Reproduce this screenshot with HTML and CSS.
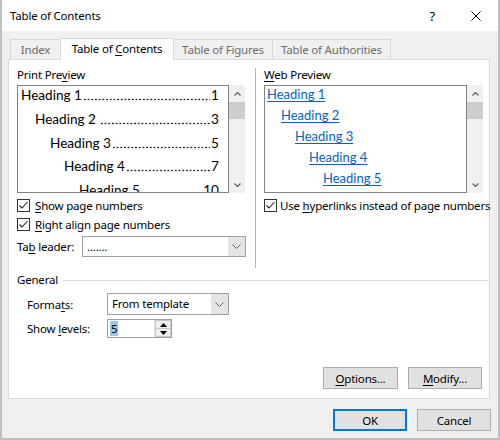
FILE: index.html
```html
<!DOCTYPE html>
<html>
<head>
<meta charset="utf-8">
<title>Table of Contents</title>
<link rel="stylesheet" href="styles.css">
</head>
<body>
<div class="window">
  <div class="titlebar">
    <span class="title">Table of Contents</span>
    <span class="help">?</span>
    <svg class="close" width="10" height="10" viewBox="0 0 10 10"><path d="M0.5 0.5 L9.5 9.5 M9.5 0.5 L0.5 9.5" stroke="#000" stroke-width="1" fill="none"/></svg>
  </div>
  <div class="client">
    <div class="tabs">
      <div class="tab t-index">Index</div>
      <div class="tab active t-toc">Table of <u>C</u>ontents</div>
      <div class="tab t-fig">Table of Figures</div>
      <div class="tab t-auth">Table of Authorities</div>
    </div>
    <div class="panel">
      <div class="top">
        <div class="col left">
          <div class="label">Print Pre<u>v</u>iew</div>
          <div class="preview">
            <div class="pbox print">
              <div class="toc-row l1"><span>Heading 1</span><span class="dots"></span><span>1</span></div>
              <div class="toc-row l2"><span>Heading 2&nbsp;</span><span class="dots"></span><span>3</span></div>
              <div class="toc-row l3"><span>Heading 3</span><span class="dots"></span><span>5</span></div>
              <div class="toc-row l4"><span>Heading 4</span><span class="dots"></span><span>7</span></div>
              <div class="toc-row l5"><span>Heading 5</span><span class="dots"></span><span>10</span></div>
            </div>
            <div class="scrollbar">
              <div class="arrow"><svg width="7" height="4" viewBox="0 0 7 4"><polyline points="0.5,3.5 3.5,0.5 6.5,3.5" fill="none" stroke="#606060" stroke-width="1.2"/></svg></div>
              <div class="thumb"></div>
              <div class="track"></div>
              <div class="arrow"><svg width="7" height="4" viewBox="0 0 7 4"><polyline points="0.5,0.5 3.5,3.5 6.5,0.5" fill="none" stroke="#606060" stroke-width="1.2"/></svg></div>
            </div>
          </div>
          <div class="check first">
            <span class="box"><svg width="11" height="11" viewBox="0 0 11 11"><polyline points="1.5,5.5 4,8 9.5,2" fill="none" stroke="#222" stroke-width="1.1"/></svg></span>
            <span><u>S</u>how page numbers</span>
          </div>
          <div class="check">
            <span class="box"><svg width="11" height="11" viewBox="0 0 11 11"><polyline points="1.5,5.5 4,8 9.5,2" fill="none" stroke="#222" stroke-width="1.1"/></svg></span>
            <span><u>R</u>ight align page numbers</span>
          </div>
          <div class="field">
            <span class="flabel">Ta<u>b</u> leader:</span>
            <div class="combo leader">
              <span class="value">.......</span>
              <span class="drop"><svg width="9" height="5" viewBox="0 0 9 5"><polyline points="0.5,0.5 4.5,4.5 8.5,0.5" fill="none" stroke="#606060" stroke-width="1"/></svg></span>
            </div>
          </div>
        </div>
        <div class="vsep"></div>
        <div class="col right">
          <div class="label"><u>W</u>eb Preview</div>
          <div class="preview">
            <div class="pbox web">
              <div class="web-row l1"><a>Heading 1</a></div>
              <div class="web-row l2"><a>Heading 2</a></div>
              <div class="web-row l3"><a>Heading 3</a></div>
              <div class="web-row l4"><a>Heading 4</a></div>
              <div class="web-row l5"><a>Heading 5</a></div>
            </div>
            <div class="scrollbar">
              <div class="arrow"><svg width="7" height="4" viewBox="0 0 7 4"><polyline points="0.5,3.5 3.5,0.5 6.5,3.5" fill="none" stroke="#606060" stroke-width="1.2"/></svg></div>
              <div class="thumb"></div>
              <div class="track"></div>
              <div class="arrow"><svg width="7" height="4" viewBox="0 0 7 4"><polyline points="0.5,0.5 3.5,3.5 6.5,0.5" fill="none" stroke="#606060" stroke-width="1.2"/></svg></div>
            </div>
          </div>
          <div class="check first tight">
            <span class="box"><svg width="11" height="11" viewBox="0 0 11 11"><polyline points="1.5,5.5 4,8 9.5,2" fill="none" stroke="#222" stroke-width="1.1"/></svg></span>
            <span>Use <u>h</u>yperlinks instead of page numbers</span>
          </div>
        </div>
      </div>
      <div class="group-head"><span>General</span><span class="hline"></span></div>
      <div class="form-row formats">
        <span class="flabel2">Forma<u>t</u>s:</span>
        <div class="combo fmt">
          <span class="value">From template</span>
          <span class="drop"><svg width="9" height="5" viewBox="0 0 9 5"><polyline points="0.5,0.5 4.5,4.5 8.5,0.5" fill="none" stroke="#606060" stroke-width="1"/></svg></span>
        </div>
      </div>
      <div class="form-row levels">
        <span class="flabel2">Show <u>l</u>evels:</span>
        <div class="spin">
          <span class="spin-value"><span class="sel">5</span></span>
          <span class="spin-btns">
            <span class="sb"><svg width="7" height="4" viewBox="0 0 7 4"><polygon points="0,4 3.5,0 7,4" fill="#000"/></svg></span>
            <span class="sb"><svg width="7" height="4" viewBox="0 0 7 4"><polygon points="0,0 3.5,4 7,0" fill="#000"/></svg></span>
          </span>
        </div>
      </div>
      <div class="panel-buttons">
        <button class="btn opt"><u>O</u>ptions...</button>
        <button class="btn mod"><u>M</u>odify...</button>
      </div>
    </div>
    <div class="dialog-buttons">
      <button class="btn ok">OK</button>
      <button class="btn cancel">Cancel</button>
    </div>
  </div>
</div>
</body>
</html>
```
FILE: styles.css
```css
html, body {
  margin: 0;
  padding: 0;
}
body {
  width: 500px;
  height: 440px;
  font-family: "Noto Sans", "Segoe UI", sans-serif;
  font-size: 11.5px;
  letter-spacing: -0.2px;
  color: #000;
  background: #f0f0f0;
}
u { text-decoration: underline; text-underline-offset: 2px; }

.window {
  box-sizing: border-box;
  width: 500px;
  height: 440px;
  border: 2px solid #bfbfbf;
  border-top: none;
  background: #f0f0f0;
  display: flex;
  flex-direction: column;
}

.titlebar {
  height: 31px;
  flex: none;
  background: #fff;
  display: flex;
  align-items: center;
  padding: 0 17px 0 8px;
}
.title { flex: 1; }
.help { font-size: 13px; margin-right: 36px; }
.close { display: block; }

.client {
  flex: 1;
  padding: 7px 8px 0 6px;
}

.tabs {
  display: flex;
  align-items: flex-end;
  height: 21px;
  padding-left: 2px;
}
.tab {
  box-sizing: border-box;
  height: 20px;
  border: 1px solid #d9d9d9;
  border-bottom: none;
  background: #f0f0f0;
  color: #6d6d6d;
  text-align: center;
  line-height: 18px;
  padding-top: 1px;
  margin-right: -1px;
  white-space: nowrap;
}
.tab.active {
  position: relative;
  z-index: 2;
  height: 22px;
  margin-bottom: -1px;
  background: #fff;
  color: #000;
  padding-top: 1px;
}
.t-index { width: 51px; }
.t-toc { width: 114px; }
.t-fig { width: 100px; }
.t-auth { width: 119px; }

.panel {
  box-sizing: border-box;
  width: 482px;
  height: 340px;
  border: 1px solid #d9d9d9;
  background: #fff;
  padding: 7px 6px 0 8px;
}

.top {
  display: flex;
  height: 201px;
}
.col.left { width: 229px; }
.col.right { width: 219px; }
.vsep {
  width: 1px;
  background: #b4b4b4;
  margin: 1px 8px 0 9px;
}

.label {
  line-height: 16px;
  margin-bottom: 2px;
  white-space: nowrap;
}

.preview {
  display: flex;
  height: 108px;
}
.pbox {
  box-sizing: border-box;
  height: 108px;
  border: 1px solid #828282;
  overflow: hidden;
  background: #fff;
}
.pbox.print { width: 212px; padding-right: 9px; }
.pbox.web { width: 203px; }

.scrollbar {
  width: 16px;
  background: #f0f0f0;
  display: flex;
  flex-direction: column;
}
.arrow {
  height: 17px;
  display: flex;
  align-items: center;
  justify-content: center;
}
.arrow svg { display: block; }
.thumb { height: 17px; background: #cdcdcd; }
.track { flex: 1; }

.toc-row {
  display: flex;
  font-family: Lato, "Noto Sans", sans-serif;
  font-size: 13.6px;
  letter-spacing: 0;
  line-height: 23.8px;
  white-space: nowrap;
}
.toc-row:first-child { margin-top: -2px; }
.toc-row .dots {
  flex: 1;
  min-width: 0;
  margin: 0 1px 0 1px;
  background-image: radial-gradient(circle, #1a1a1a 0.75px, rgba(0,0,0,0) 1.15px);
  background-size: 3.7px 3px;
  background-repeat: repeat-x;
  background-position: 0 14px;
}
.toc-row.l1 { padding-left: 3px; }
.toc-row.l2 { padding-left: 17px; }
.toc-row.l3 { padding-left: 32px; }
.toc-row.l4 { padding-left: 46px; }
.toc-row.l5 { padding-left: 61px; }

.web-row {
  font-family: Lato, "Noto Sans", sans-serif;
  font-size: 13px;
  letter-spacing: 0;
  line-height: 21px;
  white-space: nowrap;
}
.web-row:first-child { margin-top: -2px; }
.web-row a {
  color: #0563c1;
  text-decoration: underline;
  text-underline-offset: 2px;
}
.web-row.l1 { padding-left: 2px; }
.web-row.l2 { padding-left: 16px; }
.web-row.l3 { padding-left: 30px; }
.web-row.l4 { padding-left: 44px; }
.web-row.l5 { padding-left: 58px; }

.check {
  display: flex;
  align-items: center;
  height: 19px;
  gap: 5px;
  white-space: nowrap;
}
.check.first { margin-top: 3px; }
.check.tight { gap: 3px; }
.box {
  box-sizing: border-box;
  width: 13px;
  height: 13px;
  border: 1px solid #333;
  background: #fff;
  display: flex;
  align-items: center;
  justify-content: center;
  flex: none;
}
.box svg { display: block; }

.field {
  display: flex;
  align-items: center;
  margin-top: 2px;
}
.flabel { width: 65px; flex: none; }

.combo {
  box-sizing: border-box;
  display: flex;
  height: 21px;
  border: 1px solid #a0a0a0;
  background: #fff;
}
.combo .value {
  flex: 1;
  padding-left: 4px;
  line-height: 19px;
}
.combo .drop {
  width: 17px;
  background: #e5e5e5;
  display: flex;
  align-items: center;
  justify-content: center;
}
.combo .drop svg { display: block; }
.combo.leader { width: 164px; }
.combo.fmt { width: 122px; height: 22px; }
.combo.fmt .value { line-height: 20px; }

.group-head {
  display: flex;
  align-items: center;
  margin-top: 4px;
  line-height: 16px;
  margin-right: -6px;
}
.hline {
  flex: 1;
  height: 1px;
  background: #dcdcdc;
  margin-left: 5px;
}

.form-row {
  display: flex;
  align-items: center;
  padding-left: 10px;
}
.form-row.formats { margin-top: 5px; }
.form-row.levels { margin-top: 4px; }
.flabel2 { width: 80px; flex: none; }

.spin {
  box-sizing: border-box;
  width: 65px;
  height: 19px;
  border: 1px solid #a0a0a0;
  display: flex;
}
.spin-value {
  flex: 1;
  padding-left: 2px;
  padding-top: 1px;
  line-height: 15px;
}
.sel {
  display: inline-block;
  background: #99c9ef;
  padding: 0 1px;
}
.spin-btns {
  width: 16px;
  display: flex;
  flex-direction: column;
  border-left: 1px solid #e0e0e0;
}
.sb {
  flex: 1;
  display: flex;
  align-items: center;
  justify-content: center;
  background: #f0f0f0;
  border: 1px solid #c8c8c8;
}
.sb + .sb { border-top: none; }
.sb svg { display: block; }

.btn {
  box-sizing: border-box;
  height: 22px;
  width: 74px;
  padding: 0;
  font-family: inherit;
  font-size: 11.5px;
  letter-spacing: -0.2px;
  color: #000;
  background: #e1e1e1;
  border: 1px solid #adadad;
}
.panel-buttons {
  display: flex;
  justify-content: flex-end;
  gap: 10px;
  margin-top: 29px;
  padding-right: 1px;
}
.btn.opt { width: 75px; }

.dialog-buttons {
  display: flex;
  justify-content: flex-end;
  gap: 10px;
  margin-top: 10px;
  margin-right: -1px;
}
.btn.ok { border: 2px solid #0078d7; }
```
